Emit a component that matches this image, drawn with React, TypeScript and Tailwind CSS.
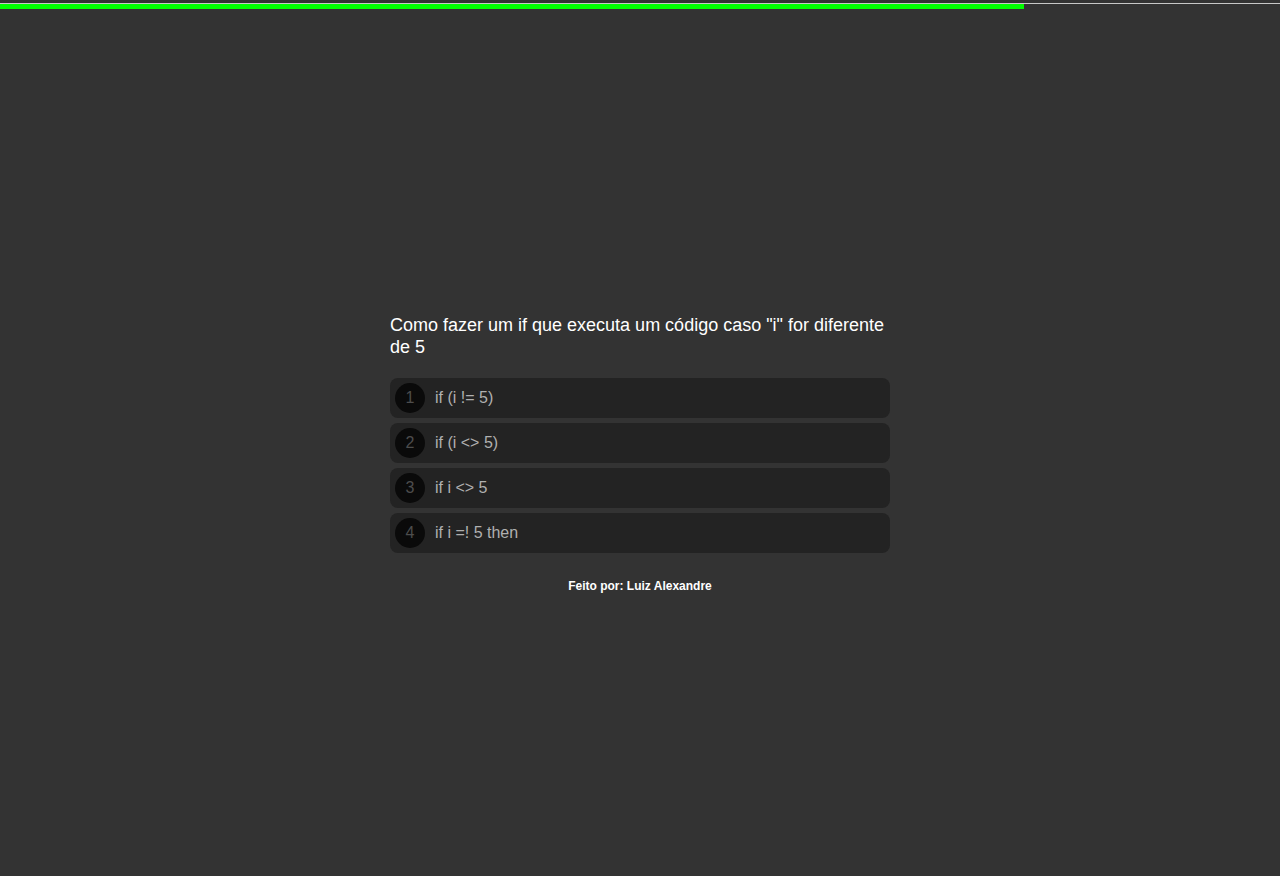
import React from "react";

const options = ["if (i != 5)", "if (i <> 5)", "if i <> 5", "if i =! 5 then"];

export default function App() {
  const progress = 80;

  return (
    <div className="min-h-screen bg-[#333333] font-['Liberation_Sans',Arial,sans-serif]">
      {/* Progress bar */}
      <div className="pt-[3px]">
        <div className="h-[6px] border-t border-[#c8c8c8] bg-[#333333]">
          <div className="h-[5px] bg-[#00ff00]" style={{ width: `${progress}%` }} />
        </div>
      </div>

      <main className="mx-auto w-[500px] pt-[305px]">
        <h1 className="text-[18px] leading-[22px] text-white">
          Como fazer um if que executa um código caso "i" for diferente de 5
        </h1>

        <div className="mt-[20px] flex flex-col gap-[5px]">
          {options.map((text, i) => (
            <button
              key={i}
              className="flex h-[40px] items-center rounded-[8px] bg-[#232323] px-[5px] text-left"
            >
              <span className="flex h-[30px] w-[30px] items-center justify-center rounded-full bg-[#0a0a0a] text-[16px] text-[#4d4d4d]">
                {i + 1}
              </span>
              <span className="ml-[10px] text-[16px] text-[#b0b0b0]">{text}</span>
            </button>
          ))}
        </div>

        <footer className="mt-[24px] text-center text-[12px] font-bold text-white">
          Feito por: Luiz Alexandre
        </footer>
      </main>
    </div>
  );
}
